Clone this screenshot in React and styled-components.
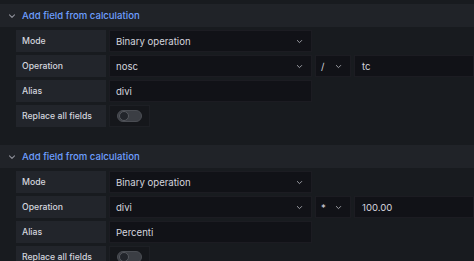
import React from 'react';
import styled, { createGlobalStyle } from 'styled-components';

const GlobalStyle = createGlobalStyle`
    html, body {
        margin: 0;
        padding: 0;
        background: #181b1f;
        overflow: hidden;
    }
    body {
        font-family: Inter, "Noto Sans", sans-serif;
        color: #ccccdc;
    }
`;

const Page = styled.div`
    width: 474px;
    height: 261px;
    padding-top: 4px;
    box-sizing: border-box;
    display: flex;
    flex-direction: column;
    gap: 18px;
`;

const Section = styled.div`
    display: flex;
    flex-direction: column;
    gap: 3px;
`;

const Header = styled.div`
    height: 23px;
    background: #202328;
    display: flex;
    align-items: center;
    gap: 6px;
    padding-left: 8px;
    color: #6e9fff;
    font-size: 9.6px;
    font-weight: 500;
`;

const Rows = styled.div`
    display: flex;
    flex-direction: column;
    gap: 3px;
    padding-left: 16px;
`;

const Row = styled.div`
    display: flex;
    gap: 3px;
    height: 22px;
`;

const Label = styled.div`
    width: 90px;
    flex: none;
    background: #22252b;
    display: flex;
    align-items: center;
    padding-left: 6px;
    box-sizing: border-box;
    font-size: 8.7px;
    font-weight: 500;
    color: #d4d5de;
`;

const Field = styled.div`
    width: ${(p) => p.width}px;
    flex: ${(p) => (p.grow ? '1 0 auto' : 'none')};
    background: #111217;
    border: 1px solid rgba(204, 204, 220, 0.06);
    box-sizing: border-box;
    display: flex;
    align-items: center;
    justify-content: space-between;
    padding: 0 ${(p) => (p.grow ? 0 : 8)}px 0 ${(p) => p.pad || 6}px;
    font-size: 9.6px;
    color: #d4d5de;
`;

const ToggleBox = styled.div`
    width: 41px;
    flex: none;
    background: #15171b;
    border: 1px solid rgba(204, 204, 220, 0.05);
    box-sizing: border-box;
    display: flex;
    align-items: center;
    justify-content: center;
`;

const Switch = styled.div`
    width: 25px;
    height: 12px;
    border-radius: 6px;
    background: #3b3e44;
    border: 1px solid #4a4d53;
    box-sizing: border-box;
    display: flex;
    align-items: center;
    padding-left: 1px;
`;

const Knob = styled.div`
    width: 8px;
    height: 8px;
    border-radius: 50%;
    background: #22252b;
    border: 1px solid #55585e;
`;

function Chevron({ size = 7, color = '#9fa1a8' }) {
    return (
        <svg width={size} height={size} viewBox="0 0 8 8">
            <path d="M1.5 2.8 L4 5.3 L6.5 2.8" fill="none" stroke={color} strokeWidth="1.1" strokeLinecap="round" strokeLinejoin="round" />
        </svg>
    );
}

function Calculation({ op, left, right, alias }) {
    return (
        <Section>
            <Header>
                <Chevron size={8} color="#8e9099" />
                <span>Add field from calculation</span>
            </Header>
            <Rows>
                <Row>
                    <Label>Mode</Label>
                    <Field width={203}>
                        Binary operation
                        <Chevron />
                    </Field>
                </Row>
                <Row>
                    <Label>Operation</Label>
                    <Field width={203}>
                        {left}
                        <Chevron />
                    </Field>
                    <Field width={36} pad={5}>
                        {op}
                        <Chevron />
                    </Field>
                    <Field grow pad={7}>{right}</Field>
                </Row>
                <Row>
                    <Label>Alias</Label>
                    <Field width={203}>{alias}</Field>
                </Row>
                <Row>
                    <Label>Replace all fields</Label>
                    <ToggleBox>
                        <Switch>
                            <Knob />
                        </Switch>
                    </ToggleBox>
                </Row>
            </Rows>
        </Section>
    );
}

export default function App() {
    return (
        <>
            <GlobalStyle />
            <Page>
                <Calculation left="nosc" op="/" right="tc" alias="divi" />
                <Calculation left="divi" op="*" right="100.00" alias="Percenti" />
            </Page>
        </>
    );
}
